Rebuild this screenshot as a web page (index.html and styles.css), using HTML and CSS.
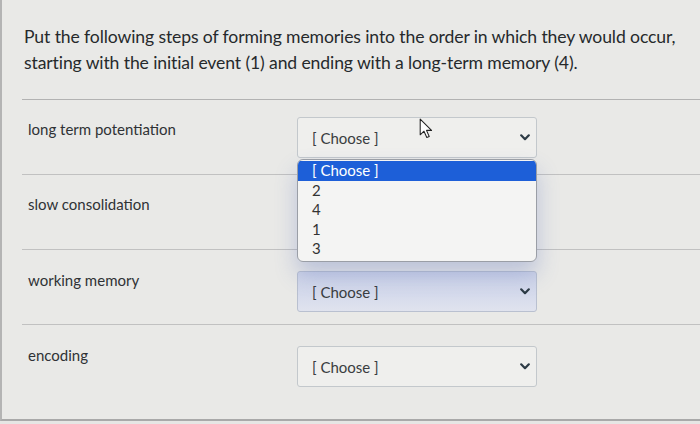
FILE: index.html
```html
<!DOCTYPE html>
<html lang="en">
<head>
<meta charset="utf-8">
<title>Matching question</title>
<link rel="stylesheet" href="styles.css">
</head>
<body>
<div class="quiz">
  <p class="prompt">Put the following steps of forming memories into the order in which they would occur, starting with the initial event (1) and ending with a long-term memory (4).</p>

  <div class="match">
    <div class="row">
      <div class="label">long term potentiation</div>
      <div class="picker">
        <div class="select"><span>[ Choose ]</span>
          <svg class="chev" width="10" height="7" viewBox="0 0 10 7"><path d="M1.2 1.3 L5 5.2 L8.8 1.3" fill="none" stroke="#2d3b45" stroke-width="2.2" stroke-linecap="round" stroke-linejoin="round"/></svg>
        </div>
        <ul class="options">
          <li class="active">[ Choose ]</li>
          <li>2</li>
          <li>4</li>
          <li>1</li>
          <li>3</li>
        </ul>
        <svg class="pointer" width="14" height="20" viewBox="0 0 14 20"><path d="M1 1 L1 16 L4.6 12.6 L7.3 18.6 L9.6 17.6 L7 11.8 L11.8 11.8 Z" fill="#fff" stroke="#222" stroke-width="1" stroke-linejoin="round"/></svg>
      </div>
    </div>

    <div class="row">
      <div class="label">slow consolidation</div>
      <div class="picker">
        <div class="select covered"><span>[ Choose ]</span>
          <svg class="chev" width="10" height="7" viewBox="0 0 10 7"><path d="M1.2 1.3 L5 5.2 L8.8 1.3" fill="none" stroke="#2d3b45" stroke-width="2.2" stroke-linecap="round" stroke-linejoin="round"/></svg>
        </div>
      </div>
    </div>

    <div class="row lower">
      <div class="label">working memory</div>
      <div class="picker">
        <div class="select tinted"><span>[ Choose ]</span>
          <svg class="chev" width="10" height="7" viewBox="0 0 10 7"><path d="M1.2 1.3 L5 5.2 L8.8 1.3" fill="none" stroke="#2d3b45" stroke-width="2.2" stroke-linecap="round" stroke-linejoin="round"/></svg>
        </div>
      </div>
    </div>

    <div class="row lower last">
      <div class="label">encoding</div>
      <div class="picker">
        <div class="select"><span>[ Choose ]</span>
          <svg class="chev" width="10" height="7" viewBox="0 0 10 7"><path d="M1.2 1.3 L5 5.2 L8.8 1.3" fill="none" stroke="#2d3b45" stroke-width="2.2" stroke-linecap="round" stroke-linejoin="round"/></svg>
        </div>
      </div>
    </div>
  </div>
</div>
</body>
</html>
```

FILE: styles.css
```css
* {
  box-sizing: border-box;
}

body {
  margin: 0;
  background: #e6e6e4;
  font-family: Lato, "Open Sans", "Liberation Sans", sans-serif;
  color: #2b2e31;
}

.quiz {
  width: 700px;
  height: 421px;
  border-left: 2px solid #b4b4b4;
  border-bottom: 2px solid #a9a9a9;
  padding-left: 20px;
  background: #e9e9e7;
}

.prompt {
  margin: 0;
  padding: 24px 0 23px 2px;
  font-size: 17.6px;
  letter-spacing: -0.12px;
  line-height: 26px;
  color: #26292c;
  border-bottom: 1px solid #b2b2b2;
}

.row {
  display: flex;
  align-items: flex-start;
  padding: 17px 0 16px;
  border-bottom: 1px solid #c1c1c1;
}

.row.lower {
  padding: 21px 0 12px;
}

.row.last {
  border-bottom: none;
}

.label {
  width: 275px;
  padding-left: 6px;
  margin-top: 2px;
  font-size: 15px;
  line-height: 20px;
  color: #2f3235;
}

.row.lower .label {
  margin-top: -1px;
}

.picker {
  position: relative;
}

.select {
  width: 240px;
  height: 41px;
  display: flex;
  align-items: center;
  justify-content: space-between;
  padding: 0 6px 0 14px;
  background: #efefed;
  border: 1px solid #c3c8cc;
  border-radius: 3px;
  font-size: 15px;
  color: #3a3d40;
}

/* hidden under the open option list */
.select.covered {
  visibility: hidden;
}

.select.tinted {
  background: linear-gradient(180deg, #cdd3e7 0%, #d6dbec 60%, #e0e3ee 100%);
  border-color: #b9c0d0;
}

.chev {
  display: block;
}

.options {
  position: absolute;
  top: 42px;
  left: 0;
  width: 240px;
  margin: 0;
  padding: 1px 0 2px;
  list-style: none;
  background: #f4f4f3;
  border: 1px solid #9a9ea6;
  border-radius: 6px;
  overflow: hidden;
  font-size: 15px;
  line-height: 19.6px;
  color: #333;
  box-shadow: 0 12px 22px rgba(70, 95, 180, 0.28);
  z-index: 2;
}

.options li {
  padding-left: 14px;
}

.options li.active {
  background: #1d5fd8;
  color: #ffffff;
}

.pointer {
  position: absolute;
  top: 1px;
  left: 122px;
  width: 15px;
  height: 21px;
  z-index: 3;
}
```
